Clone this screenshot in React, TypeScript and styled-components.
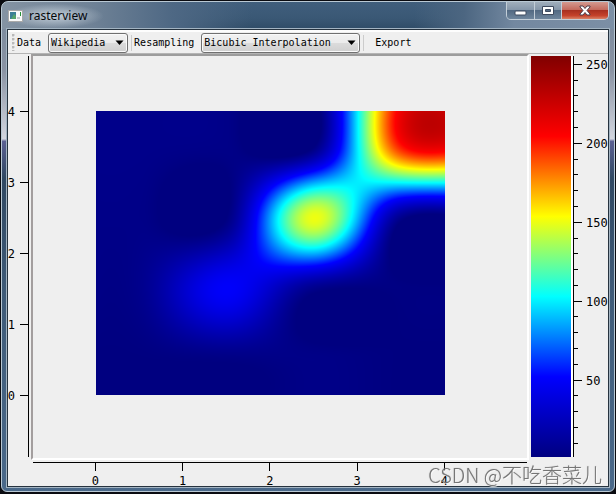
import React, { useLayoutEffect, useRef } from 'react';
import styled, { createGlobalStyle, css } from 'styled-components';

const MONO = '"DejaVu Sans Mono", "Liberation Mono", monospace';

const GlobalStyle = createGlobalStyle`
  * { box-sizing: border-box; }
  body { margin: 0; background: #0a0b10; }
`;

const Window = styled.main`
  position: relative;
  height: 100vh;
  display: grid;
  grid-template-rows: minmax(0, 1fr);
  padding: 1px 1px 2px 1px;
  background: #0a0b10;
`;

const Frame = styled.div`
  display: grid;
  grid-template-rows: 27px minmax(0, 1fr);
  padding: 0 5px 4px 5px;
  border: 1px solid #b9c8d3;
  border-radius: 7px 7px 6px 6px;
  background:
    linear-gradient(90deg, #8493a3 0, #6f8296 90px, #4e6884 170px, transparent 250px) 0 0 / 100% 27px no-repeat,
    linear-gradient(270deg, #7c8fa5 0, #7388a0 100px, #4c6681 150px, transparent 200px) 0 0 / 100% 27px no-repeat,
    linear-gradient(#405e7c, #3a5875 60%, #2f4c67) 0 0 / 100% 27px no-repeat,
    linear-gradient(#76889c 0, #8a93a3 14%, #d3d6df 28%, #5b6092 28.5%, #304862 36%, #3f5b78 60%, #4a698a);
`;

const TitleBar = styled.header`
  display: flex;
  align-items: center;
  justify-content: space-between;
`;

const Caption = styled.h1`
  display: flex;
  align-items: center;
  gap: 6px;
  margin: 0;
  padding: 0 16px 0 1px;
  border-radius: 10px;
  background: radial-gradient(ellipse, rgba(220, 230, 238, 0.75), rgba(220, 230, 238, 0) 72%);
  font: 400 12px/24px 'Noto Sans', sans-serif;
  color: #05080c;
`;

const Controls = styled.div`
  display: flex;
  align-self: flex-start;
  border: 1px solid #c3ced8;
  border-top: 0;
  border-radius: 0 0 5px 5px;
  overflow: hidden;
`;

const ControlButton = styled.button<{ $close?: boolean }>`
  display: grid;
  place-items: center;
  width: ${(p) => (p.$close ? 47 : 27)}px;
  height: 17px;
  padding: 0;
  border: 0;
  border-left: 1px solid #c3ced8;
  background: linear-gradient(#a0aebc 0, #8495a8 48%, #536a83 50%, #6e859c 100%);
  &:first-child { border-left: 0; }
  ${(p) =>
    p.$close &&
    css`
      background: linear-gradient(#d49a90 0, #c4695c 46%, #a82f20 50%, #c5422b 80%, #d98267 100%);
    `}
`;

const Client = styled.div`
  display: grid;
  grid-template-rows: 24px minmax(0, 1fr);
  border: 1px solid #26333f;
  outline: 1px solid #a3b4c2;
  background: #efefef;
`;

const Toolbar = styled.div`
  display: flex;
  align-items: center;
  padding: 0 4px;
  border-top: 2px solid #fdfdfd;
  border-bottom: 1px solid #b4b4b4;
  font: 10px/18px ${MONO};
  color: #000;
`;

const Handle = styled.span`
  width: 3px;
  height: 17px;
  margin-right: 2px;
  background: radial-gradient(circle at 1px 1px, #b9b9b9 1px, transparent 2px) 0 0 / 3px 4px;
`;

const Separator = styled.span`
  width: 1px;
  height: 16px;
  margin: 0 2px 0 3px;
  background: #cccccc;
`;

const ToolLabel = styled.label`
  margin-right: 7px;
`;

const Combo = styled.span<{ $width: number }>`
  display: grid;
  grid-template-columns: minmax(0, 1fr) 9px;
  align-items: center;
  width: ${(p) => p.$width}px;
  height: 20px;
  padding-right: 3px;
  border: 1px solid #707070;
  border-radius: 3px;
  box-shadow: inset 0 0 0 1px #fafafa;
  background: linear-gradient(#f2f2f2 0, #ebebeb 48%, #dcdcdc 50%, #cfcfcf 100%);
  svg { grid-area: 1 / 2; pointer-events: none; }
`;

const Select = styled.select`
  grid-area: 1 / 1 / 2 / 3;
  width: 100%;
  height: 18px;
  padding: 0 0 0 2px;
  border: 0;
  appearance: none;
  background: transparent;
  font: 10px/18px ${MONO};
  color: #000;
`;

const ToolButton = styled.button`
  padding: 0 9px;
  border: 0;
  background: transparent;
  font: inherit;
  color: inherit;
`;

const PlotArea = styled.section`
  display: grid;
  grid-template-columns: 23px minmax(0, 1fr) 79px;
  grid-template-rows: minmax(0, 1fr) 26px;
`;

const PlotCanvas = styled.div`
  display: grid;
  grid-template-columns: 63fr 349fr 82fr;
  grid-template-rows: 55fr 284fr 63fr;
  border: 2px solid;
  border-color: #9c9c9c #fff #fff #a39e9e;
`;

const Heatmap = styled.canvas`
  grid-area: 2 / 2;
  width: 100%;
  height: 100%;
  min-width: 0;
  min-height: 0;
`;

const ColorScale = styled.div`
  display: grid;
  grid-template-columns: 40px 2px minmax(0, 1fr);
  padding: 2px 0 3px 2px;
`;

const ColorBar = styled.div`
  background: linear-gradient(#800000, #f00 20%, #ff0 40%, #0ff 60%, #00f 80%, #000080);
`;

const Gutter = styled.div`
  background: #fff;
`;

const Scale = styled.svg<{ $side: 'left' | 'bottom' | 'right' }>`
  display: block;
  width: 100%;
  height: 100%;
  min-height: 0;
  overflow: visible;
  font: 12px ${MONO};
  shape-rendering: crispEdges;
  line { stroke: #000; stroke-width: 1px; }
  ${(p) => p.$side === 'left' && 'padding: 2px 0 3px;'}
  ${(p) => p.$side === 'bottom' && 'grid-column: 2; padding: 0 2px;'}
`;

const Watermark = styled.span`
  position: absolute;
  right: 14px;
  bottom: 4px;
  font: 300 20px/30px 'Noto Sans CJK SC', sans-serif;
  color: rgba(110, 110, 110, 0.9);
  text-shadow: 1px 1px 0 rgba(255, 255, 255, 0.7), 0 0 1px rgba(110, 110, 110, 0.6);
  pointer-events: none;
`;

const GRID = [
  [1, 2, 4, 1],
  [6, 50, 5, 2],
  [4, 2, 150, 5],
  [5, 4, 2, 200],
];

const STOPS = [
  [0, 0, 128],
  [0, 0, 255],
  [0, 255, 255],
  [255, 255, 0],
  [255, 0, 0],
  [128, 0, 0],
];

function cubic(a: number, b: number, c: number, d: number, t: number) {
  return (
    b +
    (t * (c - a)) / 2 +
    t * t * (a - 2.5 * b + 2 * c - d / 2) +
    t * t * t * (-a / 2 + 1.5 * b - 1.5 * c + d / 2)
  );
}

function sample(x: number, y: number) {
  const clamp = (n: number) => Math.max(0, Math.min(3, n));
  const col = Math.round(x);
  const row = Math.round(y);
  const along = [-2, -1, 0, 1].map((r) => {
    const line = GRID[clamp(row + r)];
    const [a, b, c, d] = [-2, -1, 0, 1].map((k) => line[clamp(col + k)]);
    return cubic(a, b, c, d, x - col + 0.5);
  });
  return cubic(along[0], along[1], along[2], along[3], y - row + 0.5);
}

function colorOf(value: number) {
  const pos = Math.max(0, Math.min(1, (value - 1) / 254)) * 5;
  const i = Math.min(4, Math.floor(pos));
  return STOPS[i].map((from, k) => Math.round(from + (STOPS[i + 1][k] - from) * (pos - i)));
}

function Raster() {
  const ref = useRef<HTMLCanvasElement>(null);
  useLayoutEffect(() => {
    const canvas = ref.current;
    const ctx = canvas?.getContext('2d');
    if (!canvas || !ctx) return;
    const { width, height } = canvas;
    const image = ctx.createImageData(width, height);
    for (let j = 0; j < height; j++) {
      for (let i = 0; i < width; i++) {
        const [r, g, b] = colorOf(sample((i / width) * 4, 4 - (j / height) * 4));
        image.data.set([r, g, b, 255], (j * width + i) * 4);
      }
    }
    ctx.putImageData(image, 0, 0);
  }, []);
  return <Heatmap ref={ref} width={349} height={284} role="img" aria-label="Raster data" />;
}

const AXIS = [0, 1, 2, 3, 4];
const pct = (n: number) => `${n * 100}%`;

function LeftScale() {
  return (
    <Scale $side="left">
      <line x1="20" x2="20" y1="0" y2="100%" />
      {AXIS.map((v) => {
        const y = pct(0.846 - v * 0.177);
        return (
          <g key={v}>
            <line x1="12" x2="20" y1={y} y2={y} />
            <text x="7" y={y} dy="5" textAnchor="end">{v}</text>
          </g>
        );
      })}
    </Scale>
  );
}

function BottomScale() {
  return (
    <Scale $side="bottom">
      <line x1="0" x2="100%" y1="2" y2="2" />
      {AXIS.map((v) => {
        const x = pct(0.126 + v * 0.1767);
        return (
          <g key={v}>
            <line x1={x} x2={x} y1="2" y2="11" />
            <text x={x} y="25" textAnchor="middle">{v}</text>
          </g>
        );
      })}
    </Scale>
  );
}

function RightScale() {
  const ticks = Array.from({ length: 25 }, (_, i) => (i + 1) * 10);
  return (
    <Scale $side="right">
      <line x1="0" x2="0" y1="0" y2="100%" />
      {ticks.map((v) => {
        const y = pct((255.3 - v) / 254);
        const major = v % 50 === 0;
        return (
          <g key={v}>
            <line x1="0" x2={major ? 9 : 5} y1={y} y2={y} />
            {major && <text x="13" y={y} dy="5">{v}</text>}
          </g>
        );
      })}
    </Scale>
  );
}

function ComboBox({ id, width, options }: { id: string; width: number; options: string[] }) {
  return (
    <Combo $width={width}>
      <Select id={id} defaultValue={options[0]}>
        {options.map((o) => (
          <option key={o}>{o}</option>
        ))}
      </Select>
      <svg width="9" height="5" viewBox="0 0 9 5" aria-hidden="true">
        <path d="M0.5 0.5h8L4.5 5z" fill="#000" />
      </svg>
    </Combo>
  );
}

export default function App() {
  return (
    <>
      <GlobalStyle />
      <Window>
        <Frame>
          <TitleBar>
            <Caption>
              <svg width="15" height="12" viewBox="0 0 15 12" aria-hidden="true">
                <rect x="0.5" y="0.5" width="14" height="11" fill="#fafafa" stroke="#a9a9a9" />
                <rect x="2" y="2" width="6" height="7" fill="#3c7f96" />
                <path d="M3 9l3-5 2 2v3z" fill="#55a36d" />
                <path d="M9 7h3v2H9z" fill="#c8cbd0" />
                <path d="M12 2h1v4h-1z" fill="#27933a" />
              </svg>
              rasterview
            </Caption>
            <Controls>
              <ControlButton aria-label="Minimize">
                <svg width="13" height="11" viewBox="0 0 13 11">
                  <rect x="1" y="6" width="11" height="4" rx="1" fill="#fff" stroke="#3e4a5e" />
                </svg>
              </ControlButton>
              <ControlButton aria-label="Maximize">
                <svg width="12" height="9" viewBox="0 0 12 9">
                  <path fillRule="evenodd" d="M.5.5h11v8h-11zM3.500 3.500v2h5v-2z" fill="#fff" stroke="#3e4a5e" />
                </svg>
              </ControlButton>
              <ControlButton $close aria-label="Close">
                <svg width="12" height="11" viewBox="0 0 12 11">
                  <path d="M1 1h3l2 2.500L8 1h3v1L8 5.500l3 3.500v1H8L6 7.500 4 10H1V9l3-3.500L1 2z" fill="#fff" stroke="#4d3c49" />
                </svg>
              </ControlButton>
            </Controls>
          </TitleBar>
          <Client>
            <Toolbar>
              <Handle />
              <ToolLabel htmlFor="data">Data</ToolLabel>
              <ComboBox id="data" width={80} options={['Wikipedia']} />
              <Separator />
              <ToolLabel htmlFor="resampling">Resampling</ToolLabel>
              <ComboBox id="resampling" width={159} options={['Bicubic Interpolation']} />
              <Separator />
              <ToolButton>Export</ToolButton>
            </Toolbar>
            <PlotArea>
              <LeftScale />
              <PlotCanvas>
                <Raster />
              </PlotCanvas>
              <ColorScale>
                <ColorBar />
                <Gutter />
                <RightScale />
              </ColorScale>
              <BottomScale />
            </PlotArea>
          </Client>
        </Frame>
        <Watermark>CSDN @不吃香菜儿</Watermark>
      </Window>
    </>
  );
}
